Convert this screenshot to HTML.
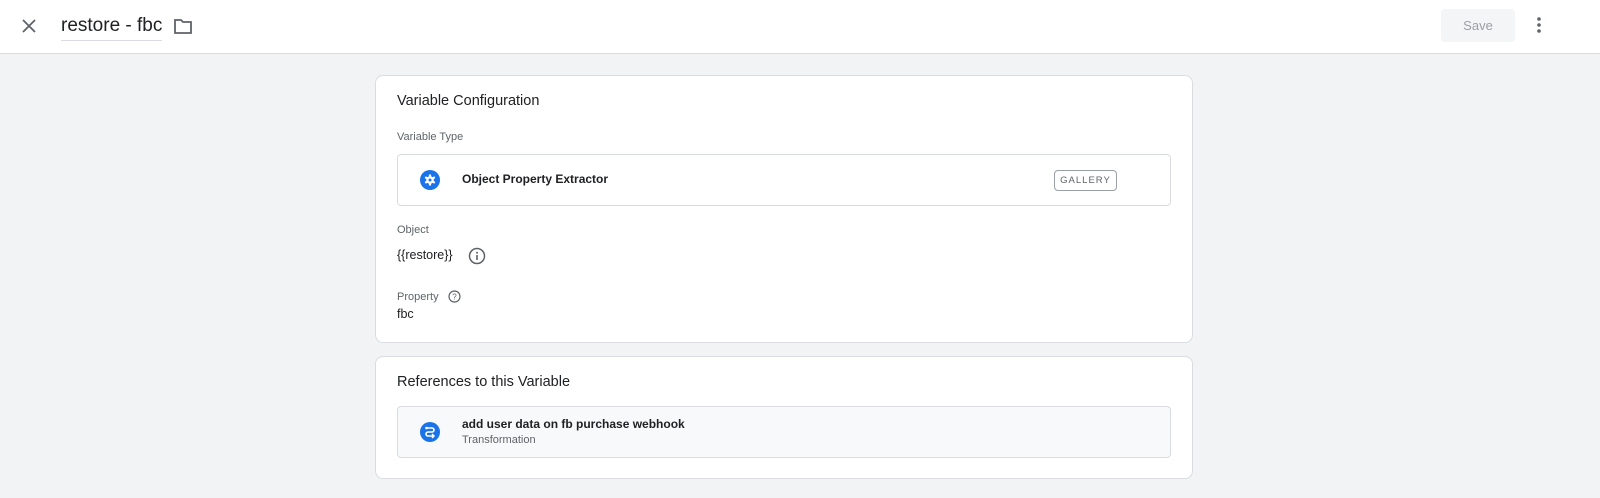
<!DOCTYPE html>
<html><head><style>
body{margin:0;width:1600px;height:498px;background:#f1f3f4;font-family:"Liberation Sans",sans-serif;color:#202124;position:relative;overflow:hidden}
.hdr{position:absolute;left:0;top:0;width:1600px;height:53px;background:#fff;border-bottom:1px solid #dadce0}
.abs{position:absolute}
.card{position:absolute;left:375px;width:816px;background:#fff;border:1px solid #dadce0;border-radius:8px}
.lbl{font-size:11px;color:#5f6368}
.box{position:absolute;left:21px;width:772px;height:50px;border:1px solid #dadce0;border-radius:4px}
.ic{position:absolute;left:22px;top:15px;width:20px;height:20px;border-radius:50%;background:#1a73e8}
</style></head><body>
<div class="hdr">
<svg class="abs" style="left:20px;top:17px" width="18" height="18" viewBox="0 0 18 18"><path d="M3 3L15 15M15 3L3 15" stroke="#5f6368" stroke-width="1.8"/></svg>
<div class="abs" style="left:61px;top:15px;font-size:19px;color:#202124">restore - fbc</div>
<div class="abs" style="left:61px;top:40px;width:101px;height:1px;background:#dadce0"></div>
<svg class="abs" style="left:173px;top:17px" width="20" height="18" viewBox="0 0 20 18"><path d="M2 3h6l2 2h8v11H2z" fill="none" stroke="#5f6368" stroke-width="1.8"/></svg>
<div class="abs" style="left:1441px;top:9px;width:74px;height:33px;background:#f4f5f6;border-radius:4px;color:#9aa0a6;font-size:13px;text-align:center;line-height:33px">Save</div>
<svg class="abs" style="left:1535px;top:15px" width="8" height="20"><circle cx="4" cy="4" r="1.8" fill="#5f6368"/><circle cx="4" cy="10" r="1.8" fill="#5f6368"/><circle cx="4" cy="16" r="1.8" fill="#5f6368"/></svg>
</div>
<div class="card" style="top:75px;height:266px">
<div class="abs" style="left:21px;top:17px;font-size:14.5px">Variable Configuration</div>
<div class="abs lbl" style="left:21px;top:55px">Variable Type</div>
<div class="box" style="top:78px">
<div class="ic"><svg width="20" height="20" viewBox="0 0 20 20"><g stroke="#fff" stroke-width="2.2"><path d="M10 4.5v11M5.2 7.2l9.6 5.6M5.2 12.8l9.6-5.6"/></g><circle cx="10" cy="10" r="3.8" fill="#fff"/><circle cx="10" cy="10" r="1.5" fill="#1a73e8"/></svg></div>
<div class="abs" style="left:64px;top:17px;font-size:12px;font-weight:bold;color:#202124">Object Property Extractor</div>
<div class="abs" style="left:656px;top:15px;width:61px;height:19px;border:1px solid #9aa0a6;border-radius:4px;font-size:9.5px;letter-spacing:1px;color:#5f6368;text-align:center;line-height:19px">GALLERY</div>
</div>
<div class="abs lbl" style="left:21px;top:148px">Object</div>
<div class="abs" style="left:21px;top:172px;font-size:12.5px">{{restore}}</div>
<svg class="abs" style="left:92px;top:171px" width="18" height="18"><circle cx="9" cy="9" r="7.5" fill="none" stroke="#5f6368" stroke-width="1.5"/><rect x="8.2" y="8" width="1.6" height="5" fill="#5f6368"/><circle cx="9" cy="5.8" r="1" fill="#5f6368"/></svg>
<div class="abs lbl" style="left:21px;top:215px">Property</div>
<svg class="abs" style="left:72px;top:214px" width="13" height="13"><circle cx="6.5" cy="6.5" r="5.5" fill="none" stroke="#5f6368" stroke-width="1.2"/><text x="6.5" y="9.5" font-size="8" text-anchor="middle" fill="#5f6368" font-family="Liberation Sans">?</text></svg>
<div class="abs" style="left:21px;top:231px;font-size:12.5px">fbc</div>
</div>
<div class="card" style="top:356px;height:121px">
<div class="abs" style="left:21px;top:17px;font-size:14.5px">References to this Variable</div>
<div class="box" style="top:49px;background:#f8f9fa">
<div class="ic"><svg width="20" height="20" viewBox="0 0 20 20"><path d="M7 6h5a2 2 0 0 1 0 4H8a2 2 0 0 0 0 4h5" fill="none" stroke="#fff" stroke-width="1.6"/><circle cx="6.5" cy="6" r="1.3" fill="#fff"/><path d="M12 12l2 2-2 2" fill="none" stroke="#fff" stroke-width="1.5"/></svg></div>
<div class="abs" style="left:64px;top:10px;font-size:12px;font-weight:bold">add user data on fb purchase webhook</div>
<div class="abs" style="left:64px;top:27px;font-size:11px;color:#5f6368">Transformation</div>
</div>
</div>
</body></html>
